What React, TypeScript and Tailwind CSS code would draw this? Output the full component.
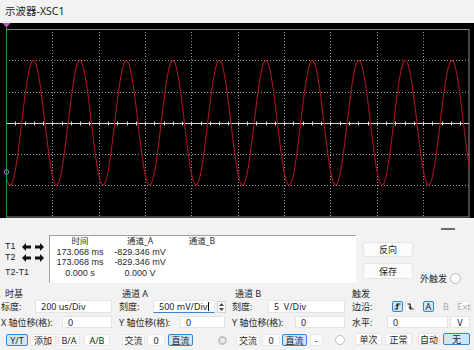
import type { ReactNode } from "react";

const PLOT = { left: 6, right: 469.5, top: 6, bottom: 193.5 };
const divX = (PLOT.right - PLOT.left) / 10;
const divY = (PLOT.bottom - PLOT.top) / 6;
const centerY = PLOT.top + divY * 3;

function wavePath() {
  const pts: string[] = [];
  for (let x = PLOT.left; x <= PLOT.right; x += 0.5) {
    const y = centerY - 62.3 * Math.cos((2 * Math.PI * (x - 33.3)) / 46.5);
    pts.push(`${x.toFixed(1)},${y.toFixed(2)}`);
  }
  return "M" + pts.join(" L");
}

function Scope() {
  const vLines = Array.from({ length: 9 }, (_, i) => PLOT.left + divX * (i + 1));
  const hLines = [1, 2, 4, 5].map((j) => PLOT.top + divY * j);
  const ticks = Array.from({ length: 49 }, (_, i) => PLOT.left + (divX / 5) * (i + 1));

  return (
    <svg width="474" height="195" viewBox="0 0 474 195" className="block bg-black">
      {vLines.map((x) => (
        <line
          key={x}
          x1={Math.round(x) + 0.5}
          x2={Math.round(x) + 0.5}
          y1={PLOT.top}
          y2={PLOT.bottom}
          stroke="#9a9a9a"
          strokeDasharray="1 2"
        />
      ))}
      {hLines.map((y) => (
        <line
          key={y}
          x1={PLOT.left}
          x2={PLOT.right}
          y1={Math.round(y) + 0.5}
          y2={Math.round(y) + 0.5}
          stroke="#9a9a9a"
          strokeDasharray="1 2"
        />
      ))}
      <line x1={PLOT.left} x2={PLOT.right} y1={100.5} y2={100.5} stroke="#d8d8d8" />
      {ticks.map((x) => (
        <line key={x} x1={Math.round(x) + 0.5} x2={Math.round(x) + 0.5} y1={98.5} y2={102.5} stroke="#d8d8d8" />
      ))}
      <rect
        x={PLOT.left + 0.5}
        y={PLOT.top + 0.5}
        width={PLOT.right - PLOT.left - 1}
        height={PLOT.bottom - PLOT.top}
        fill="none"
        stroke="#8c8c8c"
      />
      <path d={wavePath()} fill="none" stroke="#a8141c" strokeWidth="1.1" />
      {/* cursors T1 / T2 sit on top of each other */}
      <line x1="6.5" x2="6.5" y1="3" y2="195" stroke="#1fa02a" />
      <polygon points="2.5,0 10.5,0 6.5,4.5" fill="#d64bd6" />
      <circle cx="6.5" cy="149" r="2.3" fill="none" stroke="#9a7ad6" strokeWidth="1" />
    </svg>
  );
}

function Arrow({ dir }: { dir: "left" | "right" }) {
  return (
    <svg width="9" height="8" viewBox="0 0 9 8">
      <path
        d={dir === "left" ? "M0 4 L4 0 V2.6 H9 V5.4 H4 V8 Z" : "M9 4 L5 0 V2.6 H0 V5.4 H5 V8 Z"}
        fill="#111"
      />
    </svg>
  );
}

function Btn({
  w,
  active,
  children,
  className = "",
}: {
  w: string;
  active?: boolean;
  children: ReactNode;
  className?: string;
}) {
  return (
    <div
      className={`${w} flex h-full shrink-0 items-center justify-center rounded-[2px] border ${
        active ? "border-[#2f86d6] bg-[#cfe5f8]" : "border-[#e6e6e6] bg-[#fcfcfc]"
      } ${className}`}
    >
      {children}
    </div>
  );
}

function Field({ w, children, focused }: { w: string; children?: ReactNode; focused?: boolean }) {
  return (
    <div
      className={`${w} flex h-full shrink-0 items-center border border-[#e4e4e4] bg-white pl-[5px] ${
        focused ? "border-b-[1.5px] border-b-[#2f86d6]" : ""
      }`}
    >
      {children}
    </div>
  );
}

function Ring({ size, className = "" }: { size: string; className?: string }) {
  return <div className={`${size} shrink-0 rounded-full ${className}`} />;
}

const readouts = [
  ["173.068 ms", "-829.346 mV", ""],
  ["173.068 ms", "-829.346 mV", ""],
  ["0.000 s", "0.000 V", ""],
];

export default function App() {
  return (
    <div className="h-[350px] w-[474px] overflow-hidden bg-[#f2f2f2] font-['Noto_Sans','Noto_Sans_CJK_SC',sans-serif] text-[9px] leading-none text-[#1e1e1e]">
      {/* title bar */}
      <div className="flex h-[23px] items-center pl-[5px] text-[10.5px] text-[#222]">示波器-XSC1</div>

      <Scope />

      {/* cursor readouts */}
      <div className="flex h-[69px]">
        <div className="w-[49px] shrink-0 pl-[5px] pt-[23px] font-['Liberation_Sans',sans-serif]">
          {["T1", "T2"].map((t) => (
            <div key={t} className="flex h-[11px] items-center">
              <span className="w-[17px]">{t}</span>
              <Arrow dir="left" />
              <span className="w-[4px]" />
              <Arrow dir="right" />
            </div>
          ))}
          <div className="mt-[4px] flex h-[11px] items-center">T2-T1</div>
        </div>

        <div className="mt-[17px] h-[48px] w-[307px] shrink-0 border-l border-t border-[#a0a0a0] bg-white text-[#2a2a2a]">
          <div className="flex h-[11px] items-center text-[8.5px]">
            <span className="w-[60px] text-center">时间</span>
            <span className="w-[60px] text-center">通道_A</span>
            <span className="ml-[1px] w-[62px] text-center">通道_B</span>
          </div>
          {readouts.map((row, i) => (
            <div key={i} className="flex h-[10.5px] items-center font-['Liberation_Sans',sans-serif]">
              <span className="w-[60px] text-center">{row[0]}</span>
              <span className="w-[60px] text-center">{row[1]}</span>
              <span className="ml-[1px] w-[62px] text-center">{row[2]}</span>
            </div>
          ))}
        </div>

        <div className="ml-[7px] w-[50px] shrink-0 pt-[24px]">
          <div className="h-[15px]">
            <Btn w="w-[50px]">反向</Btn>
          </div>
          <div className="mt-[6px] h-[16px]">
            <Btn w="w-[50px]">保存</Btn>
          </div>
        </div>

        <div className="flex-1 pt-[10px]">
          <div className="ml-[28px] h-[1.5px] w-[14px] bg-[#6a6a6a]" />
          <div className="mt-[43px] flex h-[12px] items-center pl-[7px]">
            <span>外触发</span>
            <Ring size="ml-[3px] h-[11px] w-[11px]" className="border border-[#b8b8b8] bg-white" />
          </div>
        </div>
      </div>

      {/* controls */}
      <div className="flex h-[63px]">
        {/* 时基 */}
        <div className="w-[115px] shrink-0 pt-[1px]">
          <div className="flex h-[11px] items-center pl-[5px]">时基</div>
          <div className="mt-[1px] flex h-[13px] items-center">
            <span className="w-[35px] pl-[1px]">标度:</span>
            <Field w="w-[77px]">200 us/Div</Field>
          </div>
          <div className="mt-[3px] flex h-[12px] items-center">
            <span className="w-[62px] pl-[1px]">X 轴位移(格):</span>
            <Field w="w-[50px]">0</Field>
          </div>
          <div className="mt-[6px] flex h-[12px] items-center pl-[6px]">
            <Btn w="w-[22px]" active>Y/T</Btn>
            <Btn w="ml-[2px] w-[26px]">添加</Btn>
            <Btn w="ml-[2px] w-[22px]">B/A</Btn>
            <Btn w="ml-[4px] w-[26px]">A/B</Btn>
          </div>
        </div>

        {/* 通道 A */}
        <div className="w-[115px] shrink-0 pt-[1px]">
          <div className="flex h-[11px] items-center pl-[7px]">通道 A</div>
          <div className="mt-[1px] flex h-[13px] items-center">
            <span className="w-[38px] pl-[4px]">刻度:</span>
            <Field w="w-[62px]" focused>
              500 mV/Div<span className="ml-[1px] h-[9px] w-px bg-black" />
            </Field>
            <div className="ml-[2px] flex h-[12px] w-[9px] flex-col items-center justify-center gap-[2px] border border-[#d0d0d0] bg-[#fafafa]">
              <svg width="5" height="3" viewBox="0 0 5 3">
                <path d="M0 3 L2.5 0 L5 3 Z" fill="#444" />
              </svg>
              <svg width="5" height="3" viewBox="0 0 5 3">
                <path d="M0 0 L2.5 3 L5 0 Z" fill="#444" />
              </svg>
            </div>
          </div>
          <div className="mt-[3px] flex h-[12px] items-center">
            <span className="w-[65px] pl-[4px]">Y 轴位移(格):</span>
            <Field w="w-[45px]">0</Field>
          </div>
          <div className="mt-[6px] flex h-[12px] items-center pl-[7px]">
            <Btn w="w-[23px]">交流</Btn>
            <Btn w="ml-[2px] w-[18px]">0</Btn>
            <Btn w="ml-[3px] w-[25px]" active>直流</Btn>
            <Ring size="ml-[25px] h-[9px] w-[9px]" className="border-[2.5px] border-[#c4c4c4] bg-[#ececec]" />
          </div>
        </div>

        {/* 通道 B */}
        <div className="w-[118px] shrink-0 pt-[1px]">
          <div className="flex h-[11px] items-center pl-[5px]">通道 B</div>
          <div className="mt-[1px] flex h-[13px] items-center">
            <span className="w-[38px] pl-[2px]">刻度:</span>
            <Field w="w-[77px]">5&nbsp;&nbsp;V/Div</Field>
          </div>
          <div className="mt-[3px] flex h-[12px] items-center">
            <span className="w-[65px] pl-[2px]">Y 轴位移(格):</span>
            <Field w="w-[50px]">0</Field>
          </div>
          <div className="mt-[6px] flex h-[12px] items-center pl-[6px]">
            <Btn w="w-[24px]">交流</Btn>
            <Btn w="ml-[2px] w-[18px]">0</Btn>
            <Btn w="ml-[2px] w-[25px]" active>直流</Btn>
            <Btn w="ml-[3px] w-[13px]">-</Btn>
            <Ring size="ml-[12px] h-[10px] w-[10px]" className="border border-[#c0c0c0] bg-white" />
          </div>
        </div>

        {/* 触发 */}
        <div className="flex-1 pt-[1px]">
          <div className="flex h-[11px] items-center pl-[4px]">触发</div>
          <div className="mt-[1px] flex h-[13px] items-center">
            <span className="w-[44px] pl-[4px]">边沿:</span>
            <div className="flex h-[11px] items-center">
              <Btn w="w-[11px]" active>
                <svg width="7" height="7" viewBox="0 0 7 7">
                  <path d="M0.5 6 H3.2 V1 H6.5" fill="none" stroke="#111" strokeWidth="1.1" />
                  <path d="M1.8 3.3 L3.2 1.4 L4.6 3.3" fill="none" stroke="#111" strokeWidth="0.9" />
                </svg>
              </Btn>
              <Btn w="ml-[2px] w-[10px]">
                <svg width="7" height="7" viewBox="0 0 7 7">
                  <path d="M0.5 1 H3.2 V6 H6.5" fill="none" stroke="#111" strokeWidth="1.1" />
                  <path d="M1.8 3.7 L3.2 5.6 L4.6 3.7" fill="none" stroke="#111" strokeWidth="0.9" />
                </svg>
              </Btn>
              <Btn w="ml-[8px] w-[11px]" active>A</Btn>
              <span className="ml-[9px] w-[6px] text-[#a8a8a8]">B</span>
              <Btn w="ml-[8px] w-[14px]" className="text-[#a8a8a8]">Ext</Btn>
            </div>
          </div>
          <div className="mt-[3px] flex h-[12px] items-center">
            <span className="w-[39px] pl-[4px]">水平:</span>
            <Field w="w-[61px]">0</Field>
            <div className="ml-[2px] flex h-full w-[20px] items-center justify-center border border-[#e4e4e4] bg-white">V</div>
          </div>
          <div className="mt-[5px] flex h-[12px] items-center pl-[7px]">
            <Btn w="w-[27px]">单次</Btn>
            <Btn w="ml-[3px] w-[27px]">正常</Btn>
            <Btn w="ml-[6px] w-[22px]">自动</Btn>
            <Btn w="ml-[3px] w-[27px]" active>无</Btn>
          </div>
        </div>
      </div>
    </div>
  );
}
